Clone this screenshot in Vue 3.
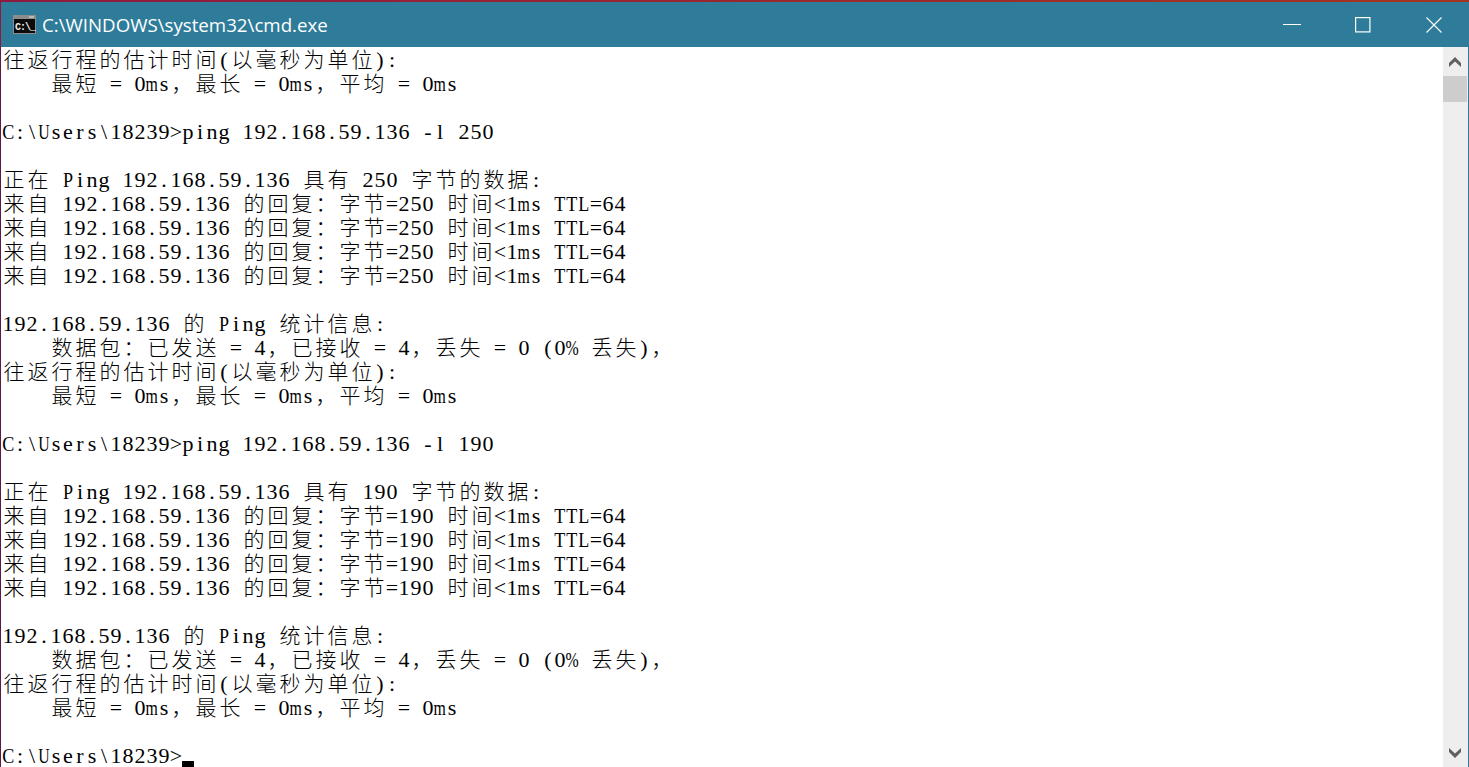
<script setup>
const stats = [
  '192.168.59.136 的 Ping 统计信息:',
  '    数据包：已发送 = 4，已接收 = 4，丢失 = 0 (0% 丢失)，',
  '往返行程的估计时间(以毫秒为单位):',
  '    最短 = 0ms，最长 = 0ms，平均 = 0ms',
]
const run = (size) => [
  `C:\\Users\\18239>ping 192.168.59.136 -l ${size}`,
  '',
  `正在 Ping 192.168.59.136 具有 ${size} 字节的数据:`,
  ...Array(4).fill(`来自 192.168.59.136 的回复：字节=${size} 时间<1ms TTL=64`),
  '',
  ...stats,
  '',
]
const text = [stats[2], stats[3], '', ...run(250), ...run(190), 'C:\\Users\\18239>']

const narrow = { m: 'sq-a', U: 'sq-a', '%': 'sq-a', C: 'sq-b', T: 'sq-b', L: 'sq-b', P: 'sq-b' }
const cellClass = (c) => (c.charCodeAt(0) > 255 ? 'cjk' : ['latin', narrow[c]])
const lines = text.map((t) => Array.from(t))
</script>

<template>
  <div class="window">
    <div class="accent"></div>
    <header class="titlebar">
      <svg class="app-icon" width="23" height="19" viewBox="0 0 23 19">
        <rect width="23" height="19" fill="#8c8c8c" />
        <rect x="1" y="4" width="21" height="14" fill="#0c0c0c" />
        <rect x="16" y="1.5" width="5" height="1" fill="#e8e8e8" />
        <text x="2" y="15" class="icon-text">C:\_</text>
      </svg>
      <span class="title">C:\WINDOWS\system32\cmd.exe</span>
      <div class="controls">
        <div class="control">
          <svg width="18" height="16" viewBox="0 0 18 16"><rect x="0" y="7" width="18" height="1" fill="#fff" /></svg>
        </div>
        <div class="control">
          <svg width="16" height="16" viewBox="0 0 16 16"><rect x="0.6" y="0.6" width="14.3" height="14.3" fill="none" stroke="#fff" stroke-width="1.2" /></svg>
        </div>
        <div class="control">
          <svg width="16" height="16" viewBox="0 0 16 16"><path d="M0.5 0.5L15.5 15.5M15.5 0.5L0.5 15.5" fill="none" stroke="#fff" stroke-width="1.1" /></svg>
        </div>
      </div>
    </header>
    <main class="body">
      <div class="console">
        <div v-for="(line, i) in lines" :key="i" class="line">
          <span v-for="(c, j) in line" :key="j" :class="cellClass(c)"><span class="glyph">{{ c }}</span></span>
          <span v-if="i === lines.length - 1" class="cursor"></span>
        </div>
      </div>
      <aside class="scrollbar">
        <div class="arrow">
          <svg width="12" height="10" viewBox="0 0 12 10"><path d="M6 0L12 6V10L6 4.500L0 10V6Z" fill="#606060" /></svg>
        </div>
        <div class="thumb"></div>
        <div class="track"></div>
        <div class="arrow">
          <svg width="12" height="10" viewBox="0 0 12 10"><path d="M6 10L12 4V0L6 5.500L0 0V4Z" fill="#606060" /></svg>
        </div>
      </aside>
    </main>
  </div>
</template>

<style scoped>
.window {
  width: 1469px;
  height: 767px;
  display: flex;
  flex-direction: column;
  overflow: hidden;
  background: #fff;
}
.accent {
  height: 2px;
  flex: none;
  background: linear-gradient(90deg, #8e1a40, #a5341f);
}
.titlebar {
  height: 45px;
  flex: none;
  display: flex;
  align-items: center;
  background: #2e7c9a;
  border-left: 1px solid #8e1a40;
  padding-left: 12px;
  color: #fff;
}
.app-icon {
  flex: none;
  margin-right: 6px;
}
.icon-text {
  font-family: "Liberation Mono", monospace;
  font-weight: 700;
  font-size: 10px;
  letter-spacing: -1px;
  fill: #f0f0f0;
}
.title {
  font-family: "Open Sans", sans-serif;
  font-size: 18.7px;
  line-height: 24px;
}
.controls {
  margin-left: auto;
  display: flex;
}
.control {
  width: 71px;
  height: 45px;
  display: flex;
  align-items: center;
  justify-content: center;
}
.body {
  flex: 1;
  min-height: 0;
  display: flex;
  border-left: 1px solid #5a1a45;
  border-right: 1px solid #2e7c9a;
}
.console {
  flex: 1;
  min-width: 0;
  padding-left: 1px;
  padding-top: 1px;
  overflow: hidden;
}
.line {
  height: 24px;
  display: flex;
  color: #000;
}
.latin,
.cjk {
  flex: none;
  height: 24px;
  display: flex;
  justify-content: center;
  align-items: center;
  white-space: pre;
  line-height: 24px;
}
.latin {
  width: 12px;
  font-family: "Liberation Serif", serif;
  font-size: 22px;
}
.cjk {
  width: 24px;
  font-family: "Noto Sans CJK SC", sans-serif;
  font-size: 21px;
  font-weight: 300;
}
.glyph {
  flex: none;
  display: block;
}
.cjk .glyph {
  transform: translateY(-2px);
}
.sq-a .glyph {
  transform: scaleX(0.72);
}
.sq-b .glyph {
  transform: scaleX(0.82);
}
.cursor {
  width: 12px;
  height: 6px;
  align-self: flex-end;
  margin-bottom: 1px;
  background: #000;
}
.scrollbar {
  flex: none;
  width: 25px;
  display: flex;
  flex-direction: column;
  background: #eeeeee;
}
.arrow {
  height: 29px;
  flex: none;
  display: flex;
  align-items: center;
  justify-content: center;
  padding-right: 1px;
}
.thumb {
  height: 26px;
  width: 24px;
  flex: none;
  background: #cdcdcd;
}
.track {
  flex: 1;
}
</style>
